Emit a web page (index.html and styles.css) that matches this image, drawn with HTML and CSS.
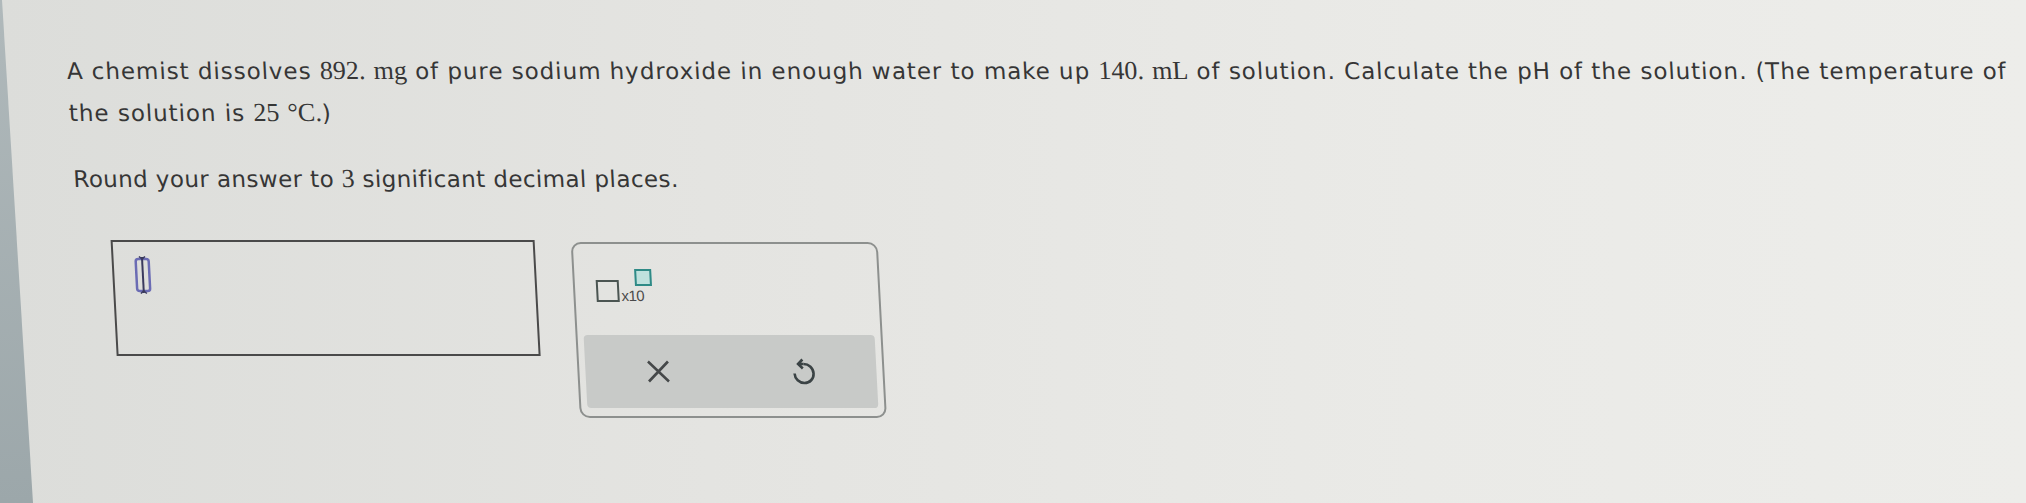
FILE: index.html
```html
<!DOCTYPE html>
<html lang="en">
<head>
<meta charset="utf-8">
<title>Question</title>
<link rel="stylesheet" href="styles.css">
</head>
<body>
<div class="edge"></div>
<main class="page">
  <p class="q">A chemist dissolves <span class="m">892.</span> <span class="m">mg</span> of pure sodium hydroxide in enough water to make up <span class="m">140.</span> <span class="m">mL</span> of solution. Calculate the pH of the solution. (The temperature of the solution is <span class="m">25</span> <span class="m">°C</span><span class="m">.</span>)</p>
  <p class="q round">Round your answer to <span class="m">3</span> significant decimal places.</p>
  <div class="answer-row">
    <div class="input-box">
      <svg class="cursor" width="19" height="42" viewBox="0 0 19 42">
        <rect x="3" y="5" width="13" height="32" rx="2.5" fill="none" stroke="#6b6cb4" stroke-width="2.5"/>
        <path d="M9.5 3 V39" stroke="#3a3a5e" stroke-width="2"/>
        <path d="M6.5 2.5 L9.5 5 L12.5 2.5 M6.5 39.5 L9.5 37 L12.5 39.5" fill="none" stroke="#3a3a5e" stroke-width="1.6"/>
      </svg>
    </div>
    <div class="keypad">
      <div class="sci">
        <span class="sci-box"></span>
        <span class="sci-x">x10</span>
        <span class="sci-exp"></span>
      </div>
      <div class="bar">
        <button class="key" type="button" aria-label="Clear">
          <svg width="24" height="23" viewBox="0 0 24 23"><path d="M2 1.5 L22 21.5 M22 1.5 L2 21.5" stroke="#454849" stroke-width="2.6" fill="none"/></svg>
        </button>
        <button class="key" type="button" aria-label="Undo">
          <svg width="24" height="28" viewBox="0 0 24 28"><path d="M12.5 6 A9.5 9.5 0 1 1 3 15.5" fill="none" stroke="#3b4345" stroke-width="2.6"/><path d="M12.5 6 H8 M11.5 1.5 L7 6 L11.5 10.5" fill="none" stroke="#3b4345" stroke-width="2.6" stroke-linejoin="miter"/></svg>
        </button>
      </div>
    </div>
  </div>
</main>
</body>
</html>
```
FILE: styles.css
```css
html, body {
  margin: 0;
  padding: 0;
}
body {
  width: 2026px;
  height: 503px;
  overflow: hidden;
  display: flex;
  background: linear-gradient(to right, #dcddda 0%, #e4e4e1 35%, #eaeae7 70%, #ededea 100%);
  font-family: "DejaVu Sans", Verdana, sans-serif;
  color: #363636;
}
.edge {
  flex: none;
  width: 34px;
  height: 503px;
  background: linear-gradient(to bottom, #b0b9bb, #9ca7aa);
  clip-path: polygon(0 0, 2px 0, 33px 100%, 0 100%);
}
.page {
  flex: 1;
  padding: 50px 6px 0 29px;
  transform: skewX(3deg);
  transform-origin: 0 0;
}
.q {
  margin: 0;
  font-size: 23px;
  letter-spacing: 0.95px;
  line-height: 41px;
}
.m {
  font-family: "Liberation Serif", "Times New Roman", serif;
  font-size: 26px;
  letter-spacing: 0;
}
.round {
  margin-top: 24px;
  padding-left: 1px;
  letter-spacing: 0.4px;
}
.answer-row {
  display: flex;
  align-items: flex-start;
  gap: 36px;
  margin-top: 40px;
  padding-left: 35px;
}
.input-box {
  box-sizing: border-box;
  width: 424px;
  height: 116px;
  border: 2px solid #4a4a4a;
  padding: 12px 0 0 19px;
}
.cursor {
  display: block;
}
.keypad {
  box-sizing: border-box;
  width: 307px;
  height: 176px;
  margin-top: 2px;
  border: 2px solid #8d908e;
  border-radius: 10px;
  padding: 25px 6px 8px;
  display: flex;
  flex-direction: column;
}
.sci {
  display: flex;
  align-items: flex-start;
  height: 34px;
  margin-left: 15px;
}
.sci-box {
  box-sizing: border-box;
  width: 23px;
  height: 22px;
  margin-top: 11px;
  border: 2.5px solid #4b5552;
}
.sci-x {
  font-family: "Liberation Sans", Arial, sans-serif;
  font-size: 15px;
  line-height: 15px;
  margin-top: 19px;
  margin-left: 2px;
  color: #4a4a4a;
  letter-spacing: -0.6px;
}
.sci-exp {
  box-sizing: border-box;
  width: 17px;
  height: 17px;
  margin-left: -8px;
  border: 2.5px solid #2f8a86;
  background: #bfe1dd;
}
.bar {
  margin-top: 32px;
  height: 73px;
  display: flex;
  background: #c8cac8;
  border-radius: 4px;
}
.key {
  flex: 1;
  display: flex;
  align-items: center;
  justify-content: center;
  background: none;
  border: 0;
  padding: 0;
}
.key svg {
  display: block;
}
```
